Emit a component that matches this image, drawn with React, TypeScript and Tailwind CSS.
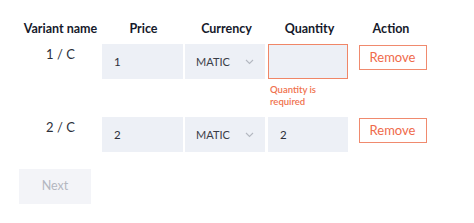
import { useState } from "react";

type Variant = {
  name: string;
  price: string;
  currency: string;
  quantity: string;
};

const initial: Variant[] = [
  { name: "1 / C", price: "1", currency: "MATIC", quantity: "" },
  { name: "2 / C", price: "2", currency: "MATIC", quantity: "2" },
];

export default function App() {
  const [rows, setRows] = useState<Variant[]>(initial);

  const update = (i: number, key: keyof Variant, value: string) => {
    setRows((prev) => prev.map((r, idx) => (idx === i ? { ...r, [key]: value } : r)));
  };

  return (
    <div
      className="w-[474px] h-[223px] bg-white pl-[19px] pt-[18px]"
      style={{ fontFamily: "Lato, 'Noto Sans', sans-serif" }}
    >
      <div className="grid grid-cols-[83px_83px_83px_83px_80px] text-[12.5px] font-bold text-[#161a2b] h-[22px] items-center">
        <div className="text-center">Variant name</div>
        <div className="text-center">Price</div>
        <div className="text-center">Currency</div>
        <div className="text-center">Quantity</div>
        <div className="text-center">Action</div>
      </div>

      <div className="mt-[4px] flex flex-col gap-[9px]">
        {rows.map((row, i) => {
          const missing = row.quantity === "";
          return (
            <div key={i} className="grid grid-cols-[83px_83px_83px_83px_80px] items-start">
              <div className="pt-[2px] text-center text-[13px] leading-[16px] text-[#2c2f3a]">
                {row.name}
              </div>
              <input
                className="w-[81px] h-[35px] bg-[#edf0f6] pl-[12px] text-[11.5px] text-[#2c2f3a] outline-none"
                value={row.price}
                onChange={(e) => update(i, "price", e.target.value)}
              />
              <div className="relative w-[80px] h-[35px] bg-[#edf0f6]">
                <span className="absolute left-[11px] top-[11px] text-[11px] leading-[13px] text-[#3a3d47]">
                  {row.currency}
                </span>
                <svg
                  className="absolute left-[60px] top-[15px]"
                  width="9"
                  height="6"
                  viewBox="0 0 9 6"
                  fill="none"
                  stroke="#b4b8c1"
                  strokeWidth="1.1"
                >
                  <path d="M1 1l3.5 3.5L8 1" />
                </svg>
              </div>
              <div className="flex flex-col">
                <input
                  className={
                    missing
                      ? "w-[80px] h-[35px] bg-[#edf0f6] border border-[#f08667] pl-[12px] text-[11.5px] outline-none"
                      : "w-[80px] h-[35px] bg-[#edf0f6] pl-[12px] text-[11.5px] text-[#2c2f3a] outline-none"
                  }
                  value={row.quantity}
                  onChange={(e) => update(i, "quantity", e.target.value)}
                />
                {missing && (
                  <div className="mt-[5px] pl-[2px] text-[9.5px] leading-[12px] font-semibold text-[#f0724e]">
                    Quantity is
                    <br />
                    required
                  </div>
                )}
              </div>
              <div className="flex justify-center">
                <button
                  className="mt-[1px] ml-[3px] w-[68px] h-[25px] border border-[#f08a6e] text-[13px] text-[#ef6a4b] bg-white"
                  onClick={() => setRows((prev) => prev.filter((_, idx) => idx !== i))}
                >
                  Remove
                </button>
              </div>
            </div>
          );
        })}
      </div>

      <button className="mt-[17px] w-[72px] h-[35px] bg-[#f3f4f8] text-[12.5px] text-[#b3b7c0]">
        Next
      </button>
    </div>
  );
}
